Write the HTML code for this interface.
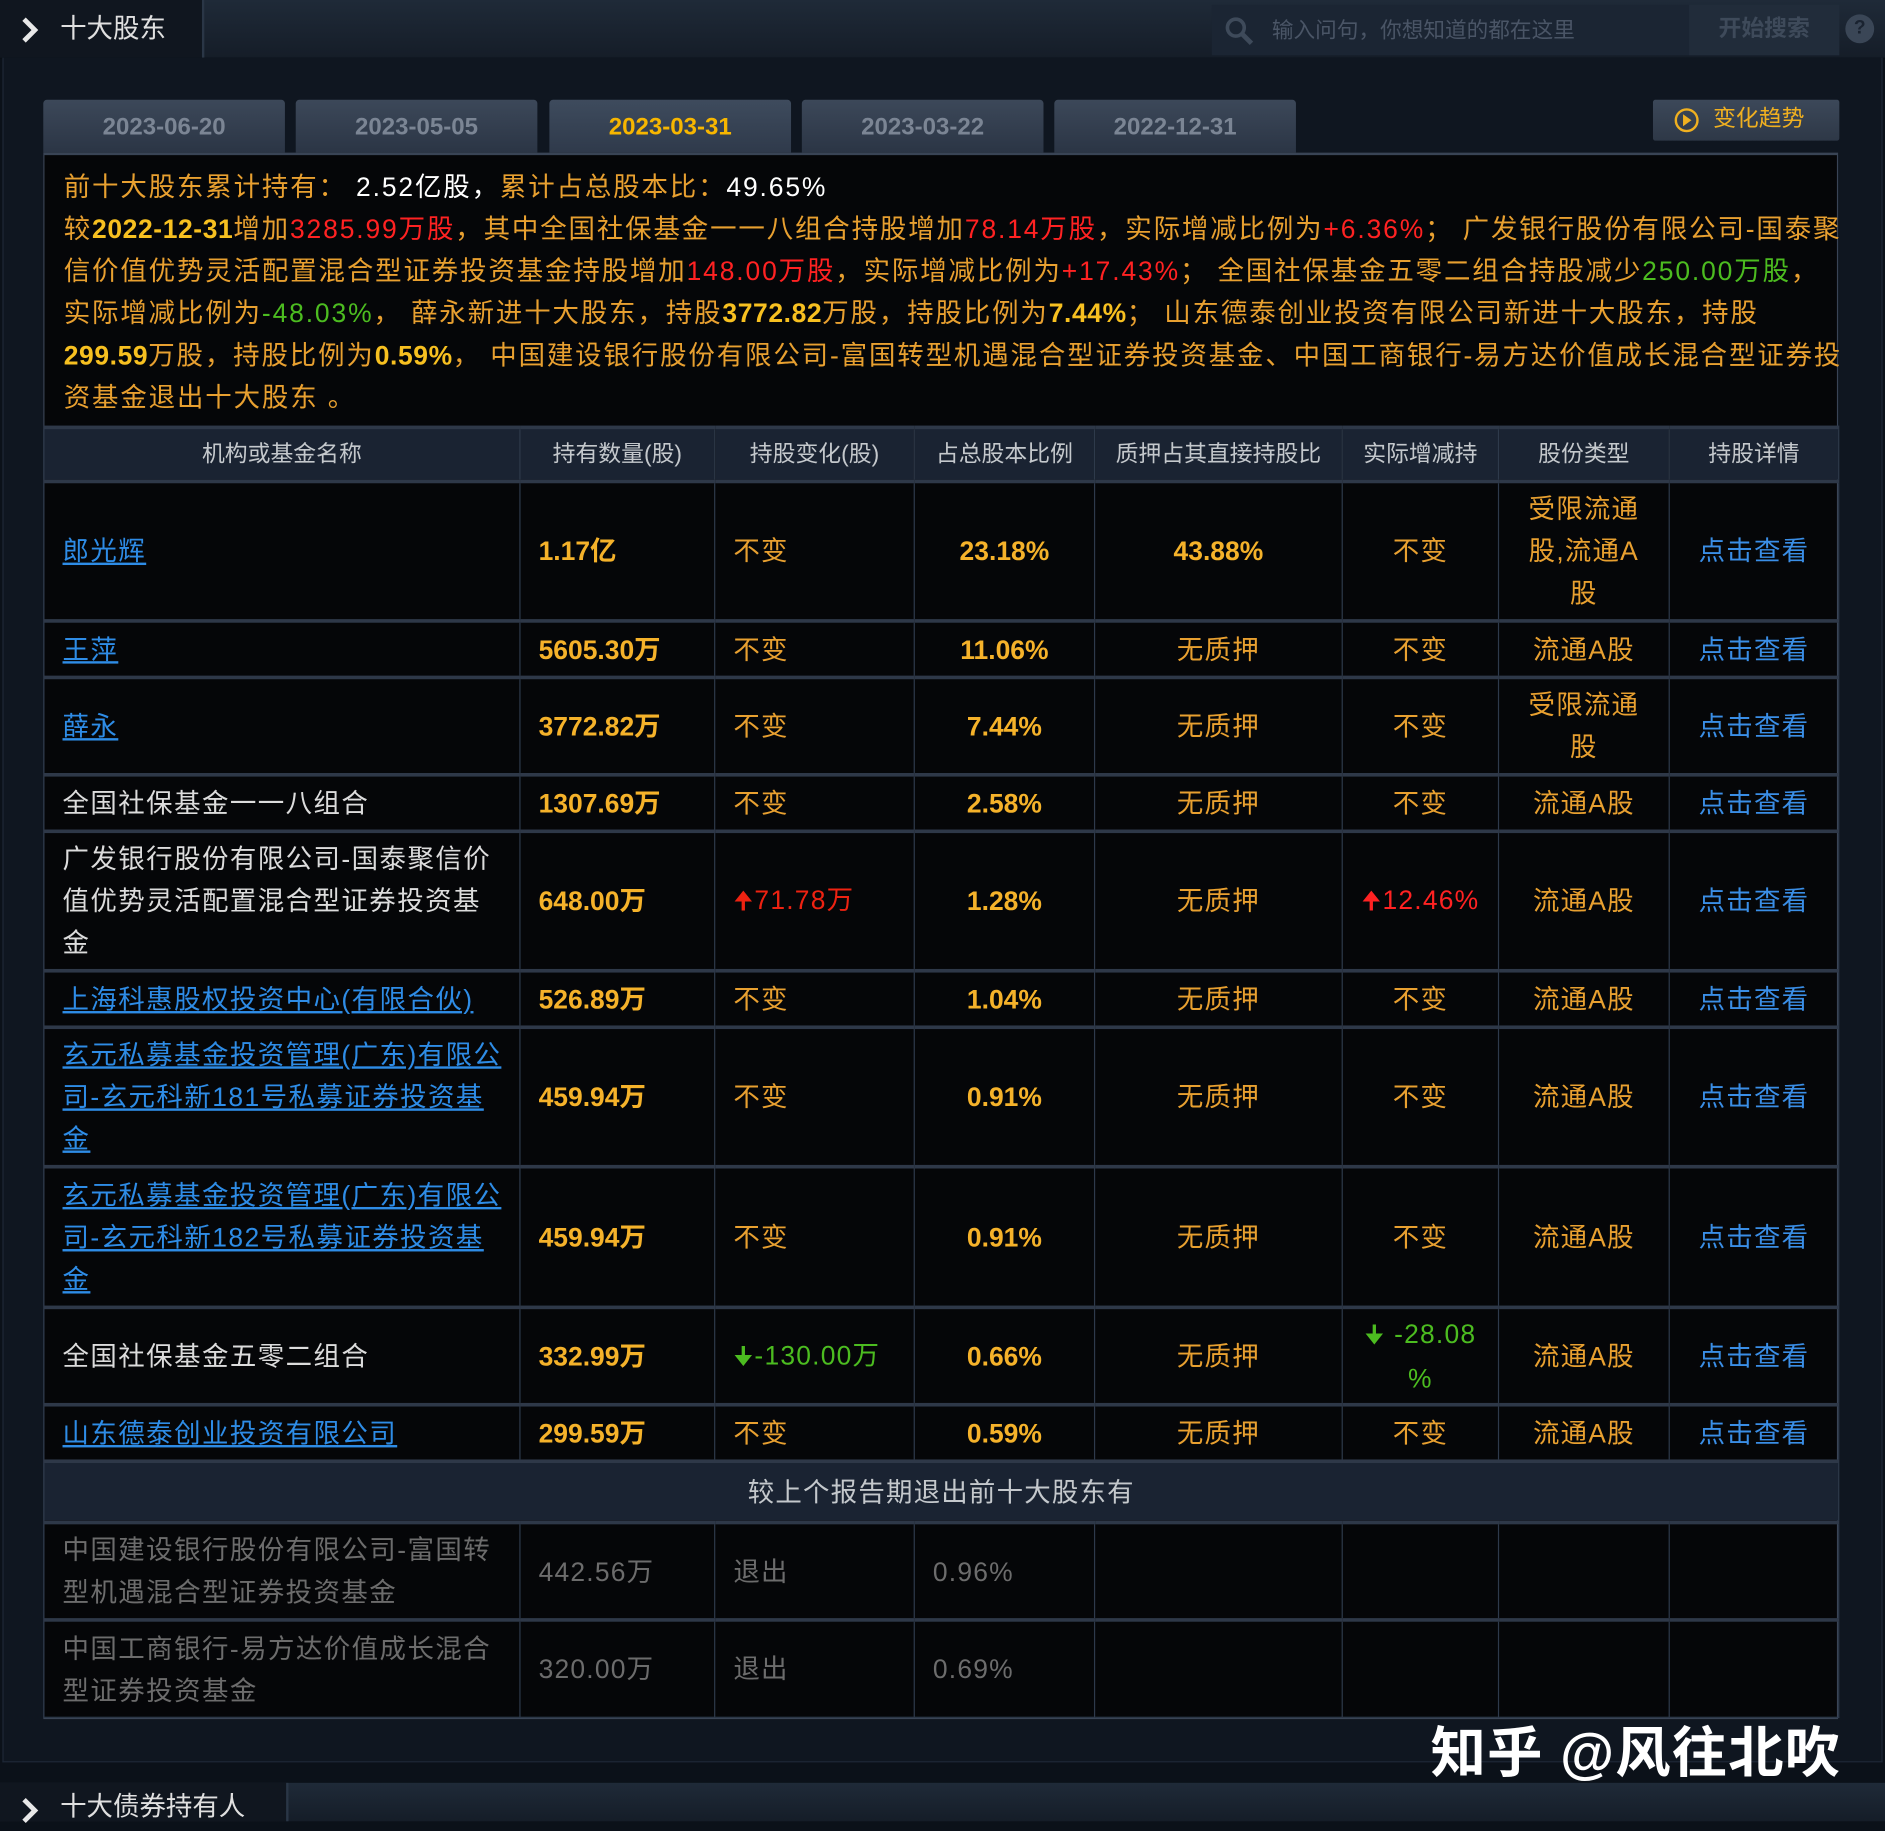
<!DOCTYPE html>
<html><head><meta charset="utf-8"><style>
html,body{margin:0;padding:0;background:#0b1119;overflow:hidden;width:1885px;height:1821px}
#w{position:absolute;left:0;top:0;width:1568px;height:1515px;transform:scale(1.20217);transform-origin:0 0;font-family:"Liberation Sans","Noto Sans CJK SC",sans-serif;}
.hdr{position:absolute;left:0;top:0;width:1568px;height:48px;background:linear-gradient(#1f2a38,#151d28);border-bottom:1px solid #0a0f15}
.ttl{position:absolute;left:0;top:0;width:168px;height:48px;background:#10161f;border-right:2px solid #2a3646;color:#e0e0e0;font-size:22px;line-height:48px}
.ttl span{position:absolute;left:50px}
.chev{position:absolute;left:16px;top:14px}
.search{position:absolute;left:1008px;top:4px;width:397px;height:42px;background:#1b2533;color:#4a5566;font-size:18px;line-height:42px}
.btn{position:absolute;left:1405px;top:4px;width:125px;height:42px;background:#212c3a;color:#3e4a5a;font-size:19px;line-height:42px;text-align:center;font-weight:bold}
.panel{position:absolute;left:2px;top:48px;width:1562px;height:1417px;background:#0f1620;border:1px solid #1e2836;border-top:none}
.tab{position:absolute;top:83px;width:201px;height:44px;background:linear-gradient(#3c4859,#2b3545);color:#7b8594;font-size:20px;font-weight:bold;text-align:center;line-height:46px;border-radius:3px 3px 0 0}
.tab.a{color:#f7b600;background:linear-gradient(#3e4b5d,#2f3a4b)}
.trend{position:absolute;left:1375px;top:83px;width:155px;height:34px;background:linear-gradient(#3c4859,#2e3847);color:#f0b020;font-size:19px;line-height:34px;border-radius:2px}
.box{position:absolute;left:36px;top:127px;width:1491px;height:1300px;border:1px solid #394455;border-top:2px solid #394455;background:#050608}
.sum{position:absolute;left:16px;top:9px;width:1480px;font-size:22px;line-height:35px;color:#e8a030;white-space:nowrap;letter-spacing:1.55px}
.w{color:#fff}.y{color:#f7c020;font-weight:bold;letter-spacing:0.5px}.r{color:#f22}.g{color:#4cbc20}
table{position:absolute;left:-1px;top:225px;border-collapse:collapse;table-layout:fixed;width:1493px;font-size:22px;line-height:35px}
td{border:1px solid #2e3a4b;border-top:3px solid #2e3848;padding:0 0 0 15px;color:#e8a030;vertical-align:middle;overflow:hidden;letter-spacing:1px}
td.c{text-align:center;padding:0}
td.f{padding-right:8px;letter-spacing:1.2px}
tr.h td{background:#1a2332;color:#c4c8cc;font-size:19px;text-align:center;padding:0;letter-spacing:0}
td.n{color:#dcdcdc}
td.l a{color:#2e8ce6;text-decoration:underline}
td.v{color:#f5b22a;font-weight:bold;letter-spacing:0}
td.k{color:#3a8ee6;text-align:center;padding:0}
tr.sec td{background:#1a2332;color:#c4c8cc;text-align:center;font-size:22px}
tr.x td{color:#6c6c6c;font-weight:normal}
.wm{position:absolute;left:1190px;top:1422px;color:#fff;font-size:46px;font-weight:bold;font-family:"Liberation Sans","Noto Sans CJK SC",sans-serif;white-space:nowrap;letter-spacing:1px}
.hdr2{position:absolute;left:0;top:1483px;width:1568px;height:32px;background:linear-gradient(#1f2a38,#151d28)}
.ttl2{position:absolute;left:0;top:0;width:238px;height:32px;background:#10161f;border-right:2px solid #2a3646;color:#e0e0e0;font-size:22px;line-height:40px}
.ttl2 span{position:absolute;left:50px}
</style></head><body><div id="w">
<div class="hdr">
 <div class="ttl"><svg class="chev" width="18" height="22" viewBox="0 0 18 22"><path d="M4 2 L13 11 L4 20" stroke="#e8e8e8" stroke-width="4" fill="none"/></svg><span>十大股东</span></div>
 <div class="search"><svg style="position:absolute;left:10px;top:9px" width="26" height="26" viewBox="0 0 26 26"><circle cx="10" cy="10" r="7" stroke="#3e4a5a" stroke-width="3" fill="none"/><path d="M15 15 L23 23" stroke="#3e4a5a" stroke-width="4"/></svg><span style="position:absolute;left:50px">输入问句，你想知道的都在这里</span></div>
 <div class="btn">开始搜索</div>
 <div style="position:absolute;left:1535px;top:12px;width:24px;height:24px;border-radius:12px;background:#3a4656;color:#1a2330;font-size:16px;line-height:24px;text-align:center;font-weight:bold">?</div>
</div>
<div class="panel"></div>
<div class="tab" style="left:36px">2023-06-20</div>
<div class="tab" style="left:246px">2023-05-05</div>
<div class="tab a" style="left:457px">2023-03-31</div>
<div class="tab" style="left:667px">2023-03-22</div>
<div class="tab" style="left:877px">2022-12-31</div>
<div class="trend"><svg style="position:absolute;left:17px;top:6px" width="22" height="22" viewBox="0 0 22 22"><circle cx="11" cy="11" r="9" stroke="#f0b020" stroke-width="2" fill="none"/><path d="M8 6 L15 11 L8 16Z" fill="#f0b020"/></svg><span style="position:absolute;left:50px">变化趋势</span></div>
<div class="box">
<div class="sum">
<div>前十大股东累计持有： <span class="w">2.52亿股，</span>累计占总股本比：<span class="w">49.65%</span></div>
<div>较<span class="y">2022-12-31</span>增加<span class="r">3285.99万股</span>，其中全国社保基金一一八组合持股增加<span class="r">78.14万股</span>，实际增减比例为<span class="r">+6.36%</span>； 广发银行股份有限公司-国泰聚</div>
<div>信价值优势灵活配置混合型证券投资基金持股增加<span class="r">148.00万股</span>，实际增减比例为<span class="r">+17.43%</span>； 全国社保基金五零二组合持股减少<span class="g">250.00万股</span>，</div>
<div>实际增减比例为<span class="g">-48.03%</span>， 薛永新进十大股东，持股<span class="y">3772.82</span>万股，持股比例为<span class="y">7.44%</span>； 山东德泰创业投资有限公司新进十大股东，持股</div>
<div><span class="y">299.59</span>万股，持股比例为<span class="y">0.59%</span>， 中国建设银行股份有限公司-富国转型机遇混合型证券投资基金、中国工商银行-易方达价值成长混合型证券投</div>
<div>资基金退出十大股东 。</div>
</div>
<table>
<colgroup><col style="width:396px"><col style="width:162px"><col style="width:166px"><col style="width:150px"><col style="width:206px"><col style="width:130px"><col style="width:142px"><col style="width:141px"></colgroup>
<tr class="h" style="height:45px"><td>机构或基金名称</td><td>持有数量(股)</td><td>持股变化(股)</td><td>占总股本比例</td><td>质押占其直接持股比</td><td>实际增减持</td><td>股份类型</td><td>持股详情</td></tr>
<tr style="height:116px"><td class="l f"><a>郎光辉</a></td><td class="v">1.17亿</td><td>不变</td><td class="c v">23.18%</td><td class="c v">43.88%</td><td class="c">不变</td><td class="c">受限流通<br>股,流通A<br>股</td><td class="k">点击查看</td></tr>
<tr style="height:47px"><td class="l f"><a>王萍</a></td><td class="v">5605.30万</td><td>不变</td><td class="c v">11.06%</td><td class="c">无质押</td><td class="c">不变</td><td class="c">流通A股</td><td class="k">点击查看</td></tr>
<tr style="height:81px"><td class="l f"><a>薛永</a></td><td class="v">3772.82万</td><td>不变</td><td class="c v">7.44%</td><td class="c">无质押</td><td class="c">不变</td><td class="c">受限流通<br>股</td><td class="k">点击查看</td></tr>
<tr style="height:47px"><td class="n f">全国社保基金一一八组合</td><td class="v">1307.69万</td><td>不变</td><td class="c v">2.58%</td><td class="c">无质押</td><td class="c">不变</td><td class="c">流通A股</td><td class="k">点击查看</td></tr>
<tr style="height:116px"><td class="n f">广发银行股份有限公司-国泰聚信价<br>值优势灵活配置混合型证券投资基<br>金</td><td class="v">648.00万</td><td class="r" style="color:#e21"><span style="font-size:20px">🠉</span>71.78万</td><td class="c v">1.28%</td><td class="c">无质押</td><td class="c" style="color:#f22"><span style="font-size:20px">🠉</span>12.46%</td><td class="c">流通A股</td><td class="k">点击查看</td></tr>
<tr style="height:47px"><td class="l f"><a>上海科惠股权投资中心(有限合伙)</a></td><td class="v">526.89万</td><td>不变</td><td class="c v">1.04%</td><td class="c">无质押</td><td class="c">不变</td><td class="c">流通A股</td><td class="k">点击查看</td></tr>
<tr style="height:116px"><td class="l f"><a>玄元私募基金投资管理(广东)有限公司-玄元科新181号私募证券投资基金</a></td><td class="v">459.94万</td><td>不变</td><td class="c v">0.91%</td><td class="c">无质押</td><td class="c">不变</td><td class="c">流通A股</td><td class="k">点击查看</td></tr>
<tr style="height:117px"><td class="l f"><a>玄元私募基金投资管理(广东)有限公司-玄元科新182号私募证券投资基金</a></td><td class="v">459.94万</td><td>不变</td><td class="c v">0.91%</td><td class="c">无质押</td><td class="c">不变</td><td class="c">流通A股</td><td class="k">点击查看</td></tr>
<tr style="height:81px"><td class="n f">全国社保基金五零二组合</td><td class="v">332.99万</td><td style="color:#4cbc20"><span style="font-size:20px">🠋</span>-130.00万</td><td class="c v">0.66%</td><td class="c">无质押</td><td class="c" style="color:#4cbc20"><span style="font-size:20px">🠋</span> -28.08<br>%</td><td class="c">流通A股</td><td class="k">点击查看</td></tr>
<tr style="height:47px"><td class="l f"><a>山东德泰创业投资有限公司</a></td><td class="v">299.59万</td><td>不变</td><td class="c v">0.59%</td><td class="c">无质押</td><td class="c">不变</td><td class="c">流通A股</td><td class="k">点击查看</td></tr>
<tr class="sec" style="height:51px"><td colspan="8" style="padding:0">较上个报告期退出前十大股东有</td></tr>
<tr class="x" style="height:81px"><td class="f">中国建设银行股份有限公司-富国转型机遇混合型证券投资基金</td><td>442.56万</td><td>退出</td><td>0.96%</td><td></td><td></td><td></td><td></td></tr>
<tr class="x" style="height:81px"><td class="f">中国工商银行-易方达价值成长混合型证券投资基金</td><td>320.00万</td><td>退出</td><td>0.69%</td><td></td><td></td><td></td><td></td></tr>
</table>
</div>
<div class="wm">知乎 @风往北吹</div>
<div class="hdr2"><div class="ttl2"><svg class="chev" style="position:absolute;left:16px;top:12px" width="18" height="22" viewBox="0 0 18 22"><path d="M4 2 L13 11 L4 20" stroke="#e8e8e8" stroke-width="4" fill="none"/></svg><span>十大债券持有人</span></div></div>
</div></body></html>
